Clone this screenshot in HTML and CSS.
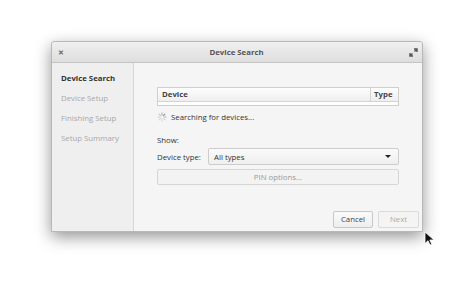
FILE: index.html
```html
<!DOCTYPE html>
<html lang="en">
<head>
    <meta charset="UTF-8">
    <title>Device Search</title>
    <link rel="stylesheet" href="styles.css">
</head>
<body>
    <div class="window">
        <div class="titlebar">
            <span class="close">&#x2715;</span>
            <span class="title">Device Search</span>
            <svg class="maximize" width="9" height="9" viewBox="0 0 9 9">
                <path d="M5 1h3v3M8 1L5.5 3.5M4 8H1V5M1 8l2.5-2.5" fill="none" stroke="#555" stroke-width="1.4"/>
            </svg>
        </div>
        <div class="main">
            <div class="sidebar">
                <div class="step active">Device Search</div>
                <div class="step">Device Setup</div>
                <div class="step">Finishing Setup</div>
                <div class="step">Setup Summary</div>
            </div>
            <div class="content">
                <div class="table">
                    <div class="table-head">
                        <div class="col-device">Device</div>
                        <div class="col-type">Type</div>
                    </div>
                </div>
                <div class="searching">
                    <svg class="spinner" width="10" height="10" viewBox="0 0 10 10">
                        <g stroke-width="1.3" stroke-linecap="round">
                            <path d="M5 1v2" stroke="#bbb"/>
                            <path d="M7.8 2.2L6.4 3.6" stroke="#999"/>
                            <path d="M9 5H7" stroke="#ccc"/>
                            <path d="M7.8 7.8L6.4 6.4" stroke="#ddd"/>
                            <path d="M5 9V7" stroke="#ddd"/>
                            <path d="M2.2 7.8l1.4-1.4" stroke="#ddd"/>
                            <path d="M1 5h2" stroke="#ddd"/>
                            <path d="M2.2 2.2l1.4 1.4" stroke="#ccc"/>
                        </g>
                    </svg>
                    <span>Searching for devices...</span>
                </div>
                <div class="show">Show:</div>
                <div class="filter">
                    <span class="filter-label">Device type:</span>
                    <div class="select">
                        <span>All types</span>
                        <span class="arrow"></span>
                    </div>
                </div>
                <div class="pin-btn">PIN options...</div>
                <div class="actions">
                    <div class="btn">Cancel</div>
                    <div class="btn disabled">Next</div>
                </div>
            </div>
        </div>
    </div>

    <svg class="cursor" width="12" height="16" viewBox="0 0 12 16">
        <path d="M1 1v11.5l3-2.8 2 4.3 1.8-.8-2-4.2h4.2z" fill="#111" stroke="#fff" stroke-width="0.8"/>
    </svg>
</body>
</html>
```

FILE: styles.css
```css
* {
    margin: 0;
    padding: 0;
    box-sizing: border-box;
}

body {
    background: #fff;
    font-family: "Open Sans", "Noto Sans", sans-serif;
    font-size: 7.8px;
    color: #333;
    width: 474px;
    height: 292px;
    overflow: hidden;
    position: relative;
}

.window {
    margin: 41px 0 0 51px;
    width: 372px;
    height: 191px;
    background: #f5f5f5;
    border: 1px solid #b8b8b8;
    border-radius: 3px 3px 0 0;
    box-shadow: 0 5px 16px rgba(0, 0, 0, 0.42);
    display: flex;
    flex-direction: column;
}

.titlebar {
    height: 21px;
    display: flex;
    align-items: center;
    justify-content: space-between;
    padding: 0 4px 0 6px;
    background: linear-gradient(#f0f0f0, #dedede);
    border-bottom: 1px solid #c4c4c4;
    border-radius: 3px 3px 0 0;
}

.close {
    font-size: 7px;
    font-weight: bold;
    color: #666;
}

.title {
    font-weight: bold;
    color: #555;
}

.main {
    flex: 1;
    display: flex;
}

.sidebar {
    width: 82px;
    background: #efefef;
    border-right: 1px solid #d6d6d6;
    padding: 9px 0 0 9px;
    display: flex;
    flex-direction: column;
    gap: 7px;
}

.step {
    height: 13px;
    line-height: 13px;
    color: #a8a8a8;
}

.step.active {
    color: #333;
    font-weight: bold;
}

.content {
    flex: 1;
    display: flex;
    flex-direction: column;
    padding: 24px 23px 0 23px;
}

.table {
    height: 19px;
    border: 1px solid #cfcfcf;
    background: #fff;
}

.table-head {
    display: flex;
    height: 14px;
    line-height: 13px;
    font-weight: bold;
    color: #444;
    background: linear-gradient(#fdfdfd, #eeeeee);
    border-bottom: 1px solid #d4d4d4;
}

.col-device {
    flex: 1;
    padding-left: 4px;
    border-right: 1px solid #d4d4d4;
}

.col-type {
    width: 27px;
    padding-left: 3px;
}

.searching {
    display: flex;
    align-items: center;
    gap: 4px;
    margin-top: 5px;
    height: 12px;
}

.show {
    margin-top: 11px;
    height: 12px;
    line-height: 12px;
}

.filter {
    display: flex;
    align-items: center;
    margin-top: 2px;
}

.filter-label {
    width: 51px;
}

.select {
    flex: 1;
    height: 17px;
    display: flex;
    align-items: center;
    justify-content: space-between;
    padding: 0 7px 0 5px;
    background: linear-gradient(#fafafa, #efefef);
    border: 1px solid #cdcdcd;
    border-radius: 2px;
}

.arrow {
    width: 0;
    height: 0;
    border-left: 3px solid transparent;
    border-right: 3px solid transparent;
    border-top: 3.5px solid #222;
}

.pin-btn {
    margin-top: 4px;
    height: 16px;
    line-height: 14px;
    text-align: center;
    color: #999;
    background: #f3f3f3;
    border: 1px solid #d6d6d6;
    border-radius: 2px;
}

.actions {
    margin-top: auto;
    margin-right: -20px;
    margin-bottom: 3px;
    display: flex;
    justify-content: flex-end;
    gap: 5px;
}

.btn {
    width: 40px;
    height: 17px;
    line-height: 15px;
    text-align: center;
    color: #444;
    background: linear-gradient(#fafafa, #eeeeee);
    border: 1px solid #c8c8c8;
    border-radius: 2px;
}

.btn.disabled {
    width: 41px;
    color: #aaa;
    background: #f4f4f4;
    border-color: #dadada;
}

.cursor {
    position: absolute;
    left: 424px;
    top: 231px;
}
```
